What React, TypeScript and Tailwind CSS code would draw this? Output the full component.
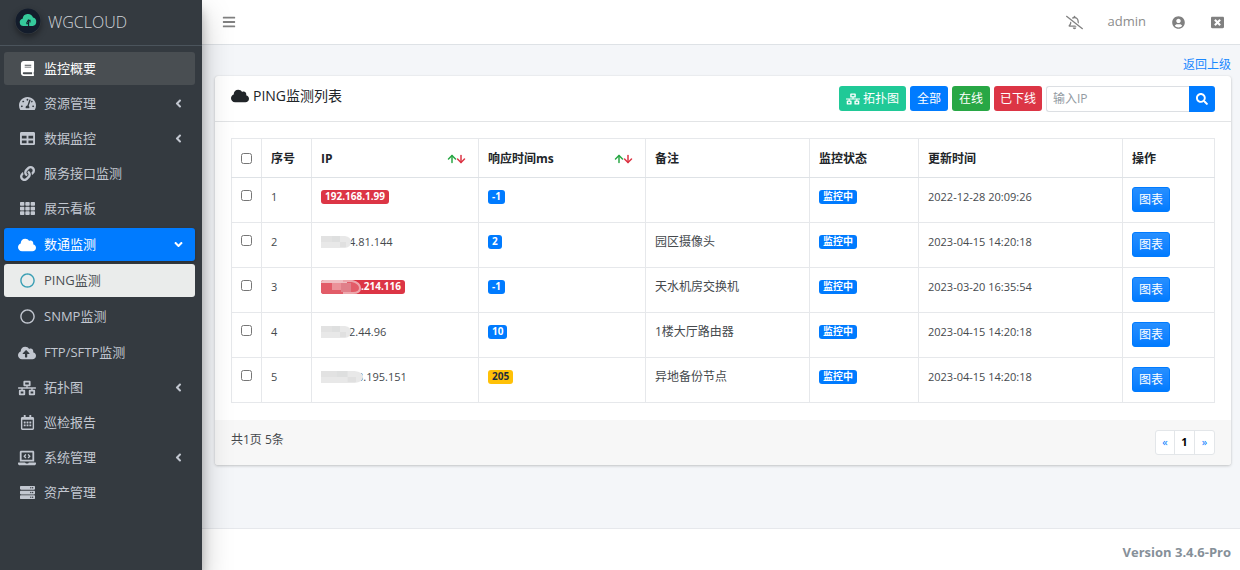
import type { ReactNode } from "react";
import { ArrowDown, ArrowUp } from "lucide-react";
import {
  FaAngleDown,
  FaAngleLeft,
  FaBars,
  FaBook,
  FaCloud,
  FaCloudUploadAlt,
  FaLaptopCode,
  FaLink,
  FaNetworkWired,
  FaRegBellSlash,
  FaRegCalendarAlt,
  FaRegCircle,
  FaSearch,
  FaServer,
  FaTable,
  FaTachometerAlt,
  FaTh,
  FaUserCircle,
  FaWindowClose,
} from "react-icons/fa";

type MenuItem = {
  label: string;
  icon: ReactNode;
  arrow?: boolean;
};

type Row = {
  id: number;
  ip: string;
  mask?: "short" | "medium" | "long";
  offline?: boolean;
  ms: string;
  slow?: boolean;
  remark: string;
  time: string;
};

const topMenu: MenuItem[] = [
  { label: "资源管理", icon: <FaTachometerAlt size={17} />, arrow: true },
  { label: "数据监控", icon: <FaTable size={15} />, arrow: true },
  { label: "服务接口监测", icon: <FaLink size={15} /> },
  { label: "展示看板", icon: <FaTh size={15} /> },
];

const bottomMenu: MenuItem[] = [
  { label: "拓扑图", icon: <FaNetworkWired size={18} />, arrow: true },
  { label: "巡检报告", icon: <FaRegCalendarAlt size={15} /> },
  { label: "系统管理", icon: <FaLaptopCode size={18} />, arrow: true },
  { label: "资产管理", icon: <FaServer size={15} /> },
];

const rows: Row[] = [
  { id: 1, ip: "192.168.1.99", offline: true, ms: "-1", remark: "", time: "2022-12-28 20:09:26" },
  { id: 2, ip: "4.81.144", mask: "short", ms: "2", remark: "园区摄像头", time: "2023-04-15 14:20:18" },
  { id: 3, ip: ".214.116", mask: "long", offline: true, ms: "-1", remark: "天水机房交换机", time: "2023-03-20 16:35:54" },
  { id: 4, ip: "2.44.96", mask: "short", ms: "10", remark: "1楼大厅路由器", time: "2023-04-15 14:20:18" },
  { id: 5, ip: "3.195.151", mask: "medium", ms: "205", slow: true, remark: "异地备份节点", time: "2023-04-15 14:20:18" },
];

function NavLink({ item, className = "text-[#c2c7d0]", arrowIcon }: { item: MenuItem; className?: string; arrowIcon?: ReactNode }) {
  return (
    <a href="#" className={`flex h-[33px] items-center rounded-[3px] pr-2.5 pl-3.5 text-[13px] ${className}`}>
      <span className="flex w-[18px] justify-center">{item.icon}</span>
      <span className="ml-2 flex-1">{item.label}</span>
      {arrowIcon}
      {item.arrow && <FaAngleLeft size={13} />}
    </a>
  );
}

function Logo() {
  return (
    <svg viewBox="0 0 26 26" className="size-[26px] rounded-full shadow-[0_3px_6px_rgba(0,0,0,0.4)]">
      <circle cx="13" cy="13" r="12.5" fill="#131c2b" />
      <path
        d="M8.4 18a3.7 3.7 0 0 1-.8-7.3 5.4 5.4 0 0 1 10.4-1.1 4.3 4.3 0 0 1-.3 8.4z"
        fill="#35c99b"
      />
      <path d="M13.6 11.4l-1.2 2.4h1.2v4.4M11.9 14v1.8h1.5M13.6 12.4h1.4v2.2" fill="none" stroke="#131c2b" strokeWidth="1.1" />
    </svg>
  );
}

function Sidebar() {
  return (
    <aside className="z-10 w-[202px] shrink-0 bg-[#343a40] shadow-[0_14px_28px_rgba(0,0,0,0.25),0_10px_10px_rgba(0,0,0,0.22)]">
      <a href="#" className="flex h-[46px] items-center border-b border-[#4b545c] pb-1 pl-[15px] text-[#d0d4da]">
        <Logo />
        <span className="ml-[7px] pt-0.5 text-base font-light">WGCLOUD</span>
      </a>
      <nav className="flex flex-col gap-0.5 pt-1.5 pr-[7px] pl-1">
        <NavLink item={{ label: "监控概要", icon: <FaBook size={15} /> }} className="bg-[#494e52] text-white" />
        {topMenu.map((item) => (
          <NavLink key={item.label} item={item} />
        ))}
        <div className="mt-px flex flex-col gap-[3px]">
          <NavLink
            item={{ label: "数通监测", icon: <FaCloud size={18} /> }}
            className="bg-[#007bff] text-white shadow-[0_1px_3px_rgba(0,0,0,0.24)]"
            arrowIcon={<FaAngleDown size={13} />}
          />
          <NavLink
            item={{ label: "PING监测", icon: <FaRegCircle size={15} className="text-[#3a9fb4]" /> }}
            className="bg-[#eaeceb] text-[#4a4f54]"
          />
          <NavLink item={{ label: "SNMP监测", icon: <FaRegCircle size={15} /> }} />
          <NavLink item={{ label: "FTP/SFTP监测", icon: <FaCloudUploadAlt size={18} /> }} />
        </div>
        {bottomMenu.map((item) => (
          <NavLink key={item.label} item={item} />
        ))}
      </nav>
    </aside>
  );
}

function Topbar() {
  return (
    <header className="flex h-[45px] items-center border-b border-[#dee2e6] bg-white pr-4 pl-5 text-[#808080]">
      <button type="button" aria-label="menu">
        <FaBars size={14} />
      </button>
      <div className="ml-auto flex items-center">
        <button type="button" aria-label="alarm">
          <FaRegBellSlash size={17} />
        </button>
        <a href="#" className="ml-[25px] text-[13px] text-[#8c8c8c]">
          admin
        </a>
        <a href="#" aria-label="user" className="ml-[26px]">
          <FaUserCircle size={13} />
        </a>
        <a href="#" aria-label="logout" className="ml-[26px]">
          <FaWindowClose size={13} />
        </a>
      </div>
    </header>
  );
}

function Mask({ size, red }: { size: "short" | "medium" | "long"; red?: boolean }) {
  if (red) {
    return (
      <svg viewBox="0 0 40 14" className="h-3.5 w-10 shrink-0">
        <path d="M0 0h32q8 3 8 8t-8 6H0z" fill="#e25c68" />
        <path d="M0 0h26v3H0z" fill="#f0bfc3" />
        <path d="M11 3h9v7h-9z" fill="#eb9299" />
        <path d="M20 3h10v9H20z" fill="#e0808a" />
        <path d="M22 1h9q8 2 8 7t-7 5H22" fill="none" stroke="#eda6ac" strokeWidth="2" />
      </svg>
    );
  }
  return (
    <svg
      viewBox="0 0 30 14"
      preserveAspectRatio="none"
      className={size === "short" ? "z-[1] -mr-0.5 h-3.5 w-[30px] shrink-0" : "z-[1] -mr-1.5 h-3.5 w-[42px] shrink-0"}
    >
      <path d="M0 1h24q6 1 6 6t-6 6H0z" fill="#e8e8e8" />
      <path d="M0 1h11v6H0z" fill="#e2e2e2" />
      <path d="M11 1h8v6h-8z" fill="#dedfdf" />
      <path d="M19 7h6v5h-6z" fill="#e0e0e0" />
    </svg>
  );
}

function IpCell({ row }: { row: Row }) {
  if (row.offline) {
    return (
      <span className="inline-flex h-3.5 items-center overflow-hidden rounded-[3px] bg-[#dc3545] text-[10px] font-bold text-white">
        {row.mask ? <Mask size={row.mask} red /> : <span className="w-1" />}
        <span className="pr-1">{row.ip}</span>
      </span>
    );
  }
  return (
    <span className="inline-flex items-center text-[11px]">
      {row.mask && <Mask size={row.mask} />}
      {row.ip}
    </span>
  );
}

function Badge({ children, className = "bg-[#007bff] text-white" }: { children: ReactNode; className?: string }) {
  return (
    <span className={`inline-flex h-3.5 items-center rounded-[3px] px-1 text-[10px] font-bold ${className}`}>
      {children}
    </span>
  );
}

function SortArrows() {
  return (
    <button type="button" aria-label="sort" className="flex items-center">
      <ArrowUp size={12} strokeWidth={3} className="-mr-[3px] text-[#28a745]" />
      <ArrowDown size={12} strokeWidth={3} className="text-[#dc3545]" />
    </button>
  );
}

function PingTable() {
  const cell = "border border-[#e6e8eb] px-[9px]";
  const th = `${cell} h-[39px] border-b-[#dee2e6] pt-px text-left font-bold text-[#212529]`;
  const td = `${cell} pt-[9px] pb-[10px] align-top`;
  return (
    <table className="w-full table-fixed border-collapse text-xs text-[#45494d]">
      <colgroup>
        <col className="w-[30px]" />
        <col className="w-[50px]" />
        <col className="w-[167px]" />
        <col className="w-[167px]" />
        <col className="w-[164px]" />
        <col className="w-[109px]" />
        <col className="w-[204px]" />
        <col className="w-[92px]" />
      </colgroup>
      <thead>
        <tr>
          <th className={th}>
            <input type="checkbox" aria-label="全选" className="block size-[11px]" />
          </th>
          <th className={th}>序号</th>
          <th className={th}>
            <div className="flex items-center justify-between pr-0.5">
              IP
              <SortArrows />
            </div>
          </th>
          <th className={th}>
            <div className="flex items-center justify-between pr-0.5">
              响应时间ms
              <SortArrows />
            </div>
          </th>
          <th className={th}>备注</th>
          <th className={th}>监控状态</th>
          <th className={th}>更新时间</th>
          <th className={th}>操作</th>
        </tr>
      </thead>
      <tbody>
        {rows.map((row) => (
          <tr key={row.id}>
            <td className={td}>
              <input type="checkbox" aria-label={`选择 ${row.id}`} className="mt-[3px] block size-[11px]" />
            </td>
            <td className={td}>
              <div className="flex h-5 items-center text-[11px]">{row.id}</div>
            </td>
            <td className={td}>
              <div className="flex h-5 items-center">
                <IpCell row={row} />
              </div>
            </td>
            <td className={td}>
              <div className="flex h-5 items-center">
                <Badge className={row.slow ? "bg-[#ffc107] text-[#1f2d3d]" : undefined}>{row.ms}</Badge>
              </div>
            </td>
            <td className={td}>
              <div className="flex h-5 items-center">{row.remark}</div>
            </td>
            <td className={td}>
              <div className="flex h-5 items-center">
                <Badge>监控中</Badge>
              </div>
            </td>
            <td className={td}>
              <div className="flex h-5 items-center text-[11px]">{row.time}</div>
            </td>
            <td className={td}>
              <button
                type="button"
                className="block h-[25px] rounded-[3px] border border-[#007bff] bg-linear-to-b from-[#268fff] to-[#007bff] px-1.5 text-white"
              >
                图表
              </button>
            </td>
          </tr>
        ))}
      </tbody>
    </table>
  );
}

function Toolbar() {
  const btn = "flex h-[25px] items-center rounded-[3px] text-white";
  return (
    <form className="flex items-center gap-1 text-xs">
      <button type="button" className={`${btn} gap-[3px] bg-[#20c997] px-[7px]`}>
        <FaNetworkWired size={14} />
        拓扑图
      </button>
      <button type="button" className={`${btn} bg-[#007bff] px-[7px]`}>
        全部
      </button>
      <button type="button" className={`${btn} bg-[#28a745] px-[7px]`}>
        在线
      </button>
      <button type="button" className={`${btn} bg-[#dc3545] px-[6px]`}>
        已下线
      </button>
      <div className="flex h-[26px]">
        <input
          type="text"
          aria-label="输入IP"
          placeholder="输入IP"
          className="w-[143px] rounded-l-[3px] border border-r-0 border-[#dcdfe3] bg-white px-1.5 outline-none placeholder:text-[#939ba2]"
        />
        <button type="button" aria-label="搜索" className="flex w-[26px] items-center justify-center rounded-r-[3px] bg-[#007bff] text-white">
          <FaSearch size={12} />
        </button>
      </div>
    </form>
  );
}

export default function App() {
  return (
    <div className="flex min-h-screen bg-[#f4f6f9] font-['Open_Sans','Noto_Sans_CJK_SC',sans-serif] text-[#212529]">
      <Sidebar />
      <div className="flex min-w-0 flex-1 flex-col">
        <Topbar />
        <main className="flex-1 pr-[9px] pl-[13px]">
          <div className="flex h-[31px] items-center justify-end pt-2">
            <a href="#" className="text-xs text-[#1a88ff]">
              返回上级
            </a>
          </div>
          <section className="rounded-[3px] bg-white shadow-[0_0_1px_rgba(0,0,0,0.125),0_1px_3px_rgba(0,0,0,0.2)]">
            <div className="flex h-[46px] items-center justify-between border-b border-[#e2e4e6] px-4">
              <h3 className="flex items-center gap-1 pb-1.5 text-sm">
                <FaCloud size={18} />
                PING监测列表
              </h3>
              <Toolbar />
            </div>
            <div className="px-4 pt-4 pb-[17px]">
              <PingTable />
            </div>
            <div className="flex h-[45px] items-center justify-between rounded-b-[3px] bg-[#f7f7f7] px-4 text-xs">
              <p className="pb-1.5 text-[#45494d]">共1页 5条</p>
              <div className="flex h-[25px] divide-x divide-[#e3e6e9] rounded-[3px] border border-[#e3e6e9] bg-white text-[11px]">
                <a href="#" className="flex w-[19px] items-center justify-center text-[#007bff]">
                  «
                </a>
                <a href="#" className="flex w-5 items-center justify-center font-bold text-black">
                  1
                </a>
                <a href="#" className="flex w-[19px] items-center justify-center text-[#007bff]">
                  »
                </a>
              </div>
            </div>
          </section>
        </main>
        <footer className="flex h-[42px] items-center justify-end border-t border-[#e6e8ec] bg-white pt-1.5 pr-[9px] text-[13px] font-bold text-[#869099]">
          Version 3.4.6-Pro
        </footer>
      </div>
    </div>
  );
}
